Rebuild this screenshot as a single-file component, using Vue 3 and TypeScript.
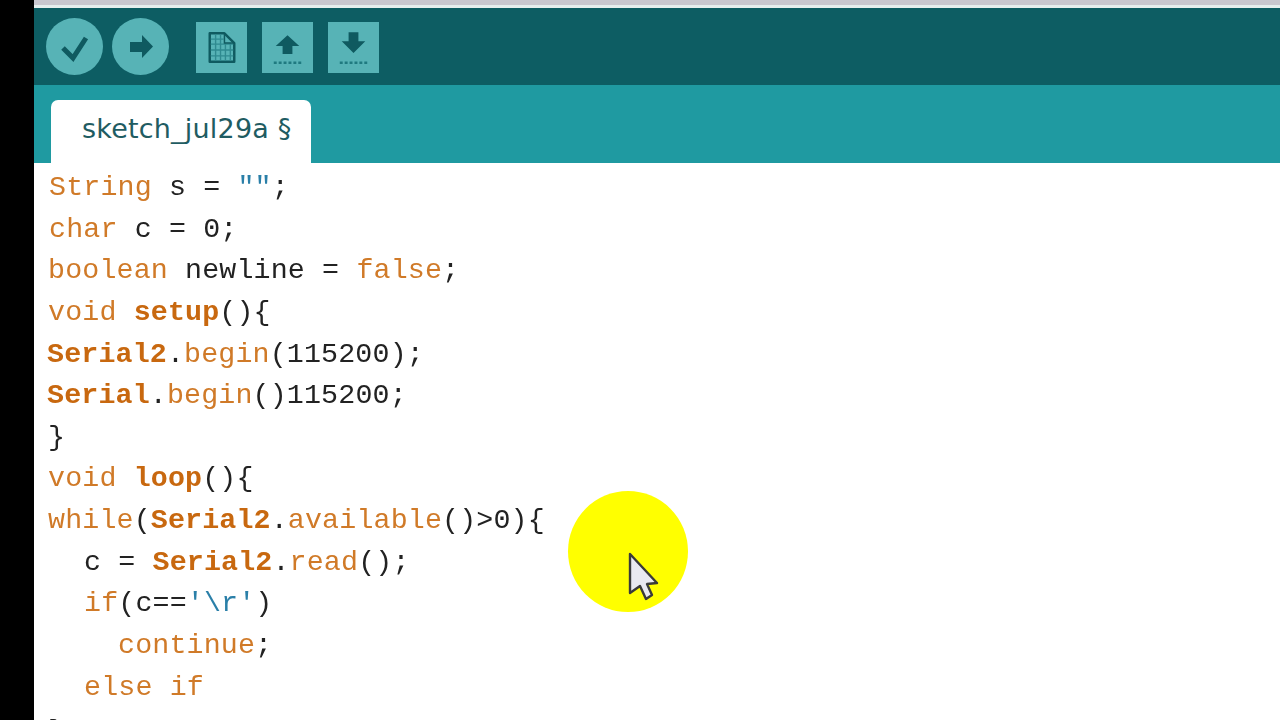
<script setup lang="ts">
type Seg = { t: string; c: string };
const k = 'kw', b = 'fn', n = 'tx', s = 'st', m = 'mt';
const lines: { pad: string; segs: Seg[] }[] = [
  { pad: 'p1', segs: [{ t: 'String', c: k }, { t: ' s = ', c: n }, { t: '""', c: s }, { t: ';', c: n }] },
  { pad: 'p1', segs: [{ t: 'char', c: k }, { t: ' c = 0;', c: n }] },
  { pad: 'p0', segs: [{ t: 'boolean', c: k }, { t: ' newline = ', c: n }, { t: 'false', c: k }, { t: ';', c: n }] },
  { pad: 'p0', segs: [{ t: 'void', c: k }, { t: ' ', c: n }, { t: 'setup', c: b }, { t: '(){', c: n }] },
  { pad: 'pm', segs: [{ t: 'Serial2', c: b }, { t: '.', c: n }, { t: 'begin', c: m }, { t: '(115200);', c: n }] },
  { pad: 'pm', segs: [{ t: 'Serial', c: b }, { t: '.', c: n }, { t: 'begin', c: m }, { t: '()115200;', c: n }] },
  { pad: 'p0', segs: [{ t: '}', c: n }] },
  { pad: 'p0', segs: [{ t: 'void', c: k }, { t: ' ', c: n }, { t: 'loop', c: b }, { t: '(){', c: n }] },
  { pad: 'p0', segs: [{ t: 'while', c: k }, { t: '(', c: n }, { t: 'Serial2', c: b }, { t: '.', c: n }, { t: 'available', c: m }, { t: '()>0){', c: n }] },
  { pad: 'p2', segs: [{ t: 'c = ', c: n }, { t: 'Serial2', c: b }, { t: '.', c: n }, { t: 'read', c: m }, { t: '();', c: n }] },
  { pad: 'p2', segs: [{ t: 'if', c: k }, { t: '(c==', c: n }, { t: "'\\r'", c: s }, { t: ')', c: n }] },
  { pad: 'p4', segs: [{ t: 'continue', c: k }, { t: ';', c: n }] },
  { pad: 'p2', segs: [{ t: 'else if', c: k }] },
  { pad: 'plast', segs: [{ t: '}', c: n }] },
];
</script>

<template>
  <div class="screen">
    <aside class="edge"></aside>
    <main class="window">
      <div class="strip"></div>
      <div class="toolbar">
        <div class="btn round">
          <svg viewBox="0 0 57 57" width="57" height="57"><path d="M17 30 L27 40 L40 20" fill="none" stroke="#0f5a60" stroke-width="5"/></svg>
        </div>
        <div class="btn round gap1">
          <svg viewBox="0 0 57 57" width="57" height="57"><path d="M18 24 H30 V17 L41 28.5 L30 40 V34 H18 Z" fill="#0f5a60"/></svg>
        </div>
        <div class="btn square gap2">
          <svg viewBox="0 0 52 52" width="52" height="52">
            <path d="M14 11 H29 L39 21 V40 H14 Z" fill="#57b3b6" stroke="#0f5a60" stroke-width="2.5" stroke-linejoin="round"/>
            <path d="M20 12 V39 M25 12 V39 M30 21 V39 M35 21 V39 M15 17 H28 M15 22 H38 M15 28 H38 M15 34 H38" stroke="#2f8a90" stroke-width="1.4"/>
            <path d="M29 11 V21 H39" fill="none" stroke="#0f5a60" stroke-width="1.5"/>
          </svg>
        </div>
        <div class="btn square gap3">
          <svg viewBox="0 0 52 52" width="52" height="52">
            <path d="M26 13 L38 24 H31 V32 H21 V24 H14 Z" fill="#0f5a60"/>
            <path d="M12 41 H40" stroke="#1f7a80" stroke-width="2.5" stroke-dasharray="3 2"/>
          </svg>
        </div>
        <div class="btn square gap3">
          <svg viewBox="0 0 52 52" width="52" height="52">
            <path d="M21 10 H31 V19 H38 L26 31 L14 19 H21 Z" fill="#0f5a60"/>
            <path d="M12 41 H40" stroke="#1f7a80" stroke-width="2.5" stroke-dasharray="3 2"/>
          </svg>
        </div>
      </div>
      <div class="tabbar">
        <div class="tab">sketch_jul29a §</div>
      </div>
      <div class="editor">
        <div v-for="(line, i) in lines" :key="i" class="line" :class="line.pad">
          <span v-for="(seg, j) in line.segs" :key="j" :class="seg.c">{{ seg.t }}</span>
        </div>
      </div>
    </main>
    <div class="spot"></div>
    <svg class="cursor" viewBox="0 0 34 50" width="34" height="50">
      <path d="M3 3 L3 42 L13 35 L19 48 L25 44 L20 33 L30 32 Z" fill="#e9e9f0" stroke="#3a3a3a" stroke-width="2.4" stroke-linejoin="round"/>
    </svg>
  </div>
</template>

<style>
html, body { margin: 0; background: #000; overflow: hidden; }
</style>

<style scoped>
.screen { position: relative; display: flex; width: 1280px; height: 720px; overflow: hidden; background: #fff; }
.edge { width: 34px; flex: none; background: #000; }
.window { flex: 1; display: flex; flex-direction: column; min-width: 0; }
.strip { height: 5px; background: #c9c7cf; border-bottom: 3px solid #e6eeee; flex: none; }
.toolbar { height: 77px; flex: none; background: #0d5d63; display: flex; align-items: center; padding-left: 12px; box-sizing: border-box; }
.btn { background: #57b3b6; display: flex; flex: none; filter: blur(.6px); }
.round { width: 57px; height: 57px; border-radius: 50%; align-items: center; justify-content: center; margin-top: -1px; }
.square { width: 51px; height: 51px; margin-top: 1px; }
.gap1 { margin-left: 9px; }
.gap2 { margin-left: 27px; }
.gap3 { margin-left: 15px; }
.tabbar { height: 78px; flex: none; background: #1f9aa1; display: flex; align-items: flex-end; padding-left: 17px; }
.tab { width: 260px; height: 63px; box-sizing: border-box; background: #fff; border-radius: 7px 7px 0 0; padding: 11px 0 0 31px; color: #1f5c62; font: 27px/36px "DejaVu Sans", sans-serif; letter-spacing: .2px; white-space: nowrap; }
.editor { flex: 1; padding: 4px 0 0 15px; font: 28.3px/41.63px "Liberation Mono", monospace; letter-spacing: .15px; filter: blur(.6px); overflow: hidden; }
.line { height: 41.63px; white-space: pre; }
.p0 { margin-left: -1px; }
.p1 { margin-left: 0; }
.pm { margin-left: -2px; }
.p2 { margin-left: 35px; }
.p4 { margin-left: 69px; }
.plast { margin-left: -1px; padding-top: 3px; }
.kw { color: #d07a28; }
.fn { color: #c8680f; font-weight: 700; }
.mt { color: #d07a28; }
.tx { color: #222; }
.st { color: #2a7fa8; }
.spot { position: absolute; left: 568px; top: 491px; width: 120px; height: 121px; border-radius: 50%; background: #ffff00; }
.cursor { position: absolute; left: 627px; top: 551px; }
</style>
